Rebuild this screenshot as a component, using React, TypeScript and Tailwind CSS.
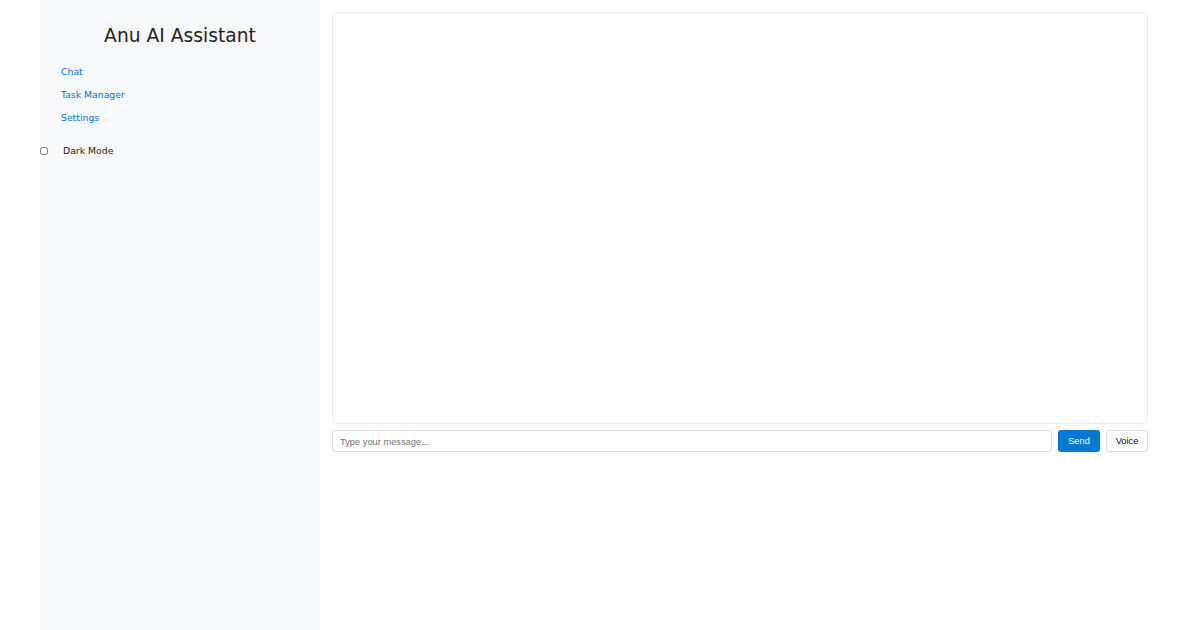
export default function App() {
  return (
    <div className="mx-auto flex min-h-screen w-[1120px] bg-white" style={{ fontFamily: '"DejaVu Sans", sans-serif' }}>
      <aside className="w-[280px] shrink-0 bg-[#f8f9fa]">
        <h2 className="pt-[23px] text-center text-[18.7px] leading-[26px] text-[#222]">Anu AI Assistant</h2>
        <ul className="mt-[16px] flex flex-col gap-[9px] pl-[21px]">
          <li className="text-[9.3px] leading-[14px] text-[#0078d4]">Chat</li>
          <li className="text-[9.3px] leading-[14px] text-[#0078d4]">Task Manager</li>
          <li className="text-[9.3px] leading-[14px] text-[#0078d4]">Settings</li>
        </ul>
        <label className="mt-[19px] flex items-center text-[9.3px] leading-[14px] text-[#222]">
          <input type="checkbox" className="m-0 h-[8px] w-[8px]" />
          <span className="ml-[15px]">Dark Mode</span>
        </label>
      </aside>
      <main className="flex flex-1 flex-col p-[12px]">
        <div className="h-[412px] rounded-[4px] border border-[#eeeeee]"></div>
        <div className="mt-[6px] flex gap-[6px]" style={{ fontFamily: '"Liberation Sans", Arial, sans-serif' }}>
          <input
            className="h-[22px] flex-1 rounded-[3px] border border-[#e0e0e0] px-[7px] pt-[1px] text-[9.3px] outline-none placeholder:text-[#757575]"
            placeholder="Type your message..."
          />
          <button className="h-[22px] w-[42px] rounded-[3px] bg-[#0078d4] pt-[1px] text-[9.3px] text-white">Send</button>
          <button className="h-[22px] w-[42px] rounded-[3px] border border-[#e0e0e0] bg-white pt-[1px] text-[9.3px] text-[#111]">Voice</button>
        </div>
      </main>
    </div>
  );
}
